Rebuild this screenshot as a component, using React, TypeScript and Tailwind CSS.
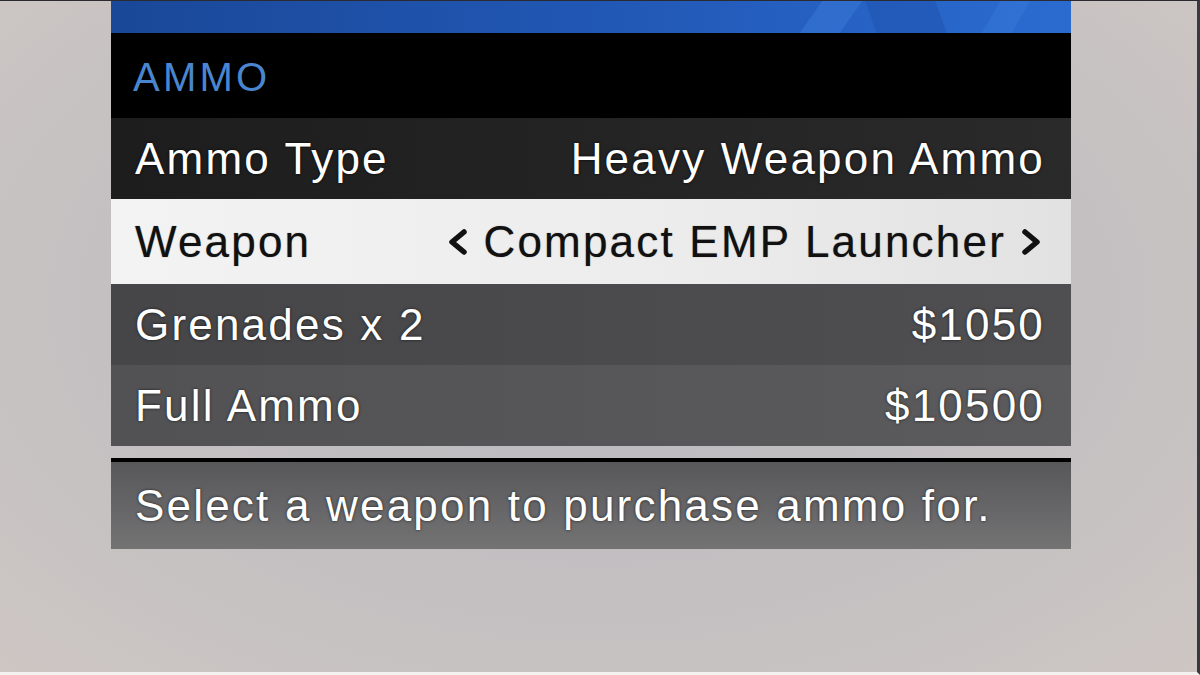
import React from 'react';

type Row = { label: string; value: string };

const priceRows: Row[] = [
  { label: 'Grenades x 2', value: '$1050' },
  { label: 'Full Ammo', value: '$10500' },
];

const font = "font-['Liberation_Sans',Arial,sans-serif]";

const Chevron = ({ dir }: { dir: 'left' | 'right' }) => (
  <svg width="22" height="28" viewBox="0 0 22 28" className="shrink-0">
    <polyline
      points={dir === 'left' ? '17,4 5,14 17,24' : '5,4 17,14 5,24'}
      fill="none"
      stroke="#111"
      strokeWidth="5.5"
      strokeLinecap="round"
      strokeLinejoin="round"
    />
  </svg>
);

export default function App() {
  return (
    <div
      className={`${font} h-[675px] w-[1200px] overflow-hidden border-t border-r-[3px] border-b-[3px] border-t-[#2a2a30] border-r-[#3a3a3e] border-b-[#f4f2f0] bg-[radial-gradient(ellipse_at_50%_45%,#b9b8be_0%,#c1bec1_45%,#cdc6c3_100%)]`}
    >
      <div className="ml-[111px] flex w-[960px] flex-col">
        {/* header strip */}
        <div className="relative h-[32px] overflow-hidden bg-[linear-gradient(90deg,#1a4898_0%,#2157b4_50%,#2b6bd0_100%)]">
          <div className="absolute top-0 left-[700px] h-full w-[40px] -skew-x-[35deg] bg-[#3a7ad8]/50" />
          <div className="absolute top-0 left-[760px] h-full w-[70px] skew-x-[20deg] bg-[#1f55b0]/60" />
          <div className="absolute top-0 left-[880px] h-full w-[30px] -skew-x-[30deg] bg-[#3d7ddc]/40" />
        </div>

        {/* title */}
        <div className="flex h-[85px] items-center bg-black px-[22px] pt-[3px]">
          <span className="text-[40px] leading-none tracking-[3.2px] text-[#4a86cf]">AMMO</span>
        </div>

        <div className="flex h-[81px] items-center justify-between bg-[linear-gradient(90deg,#1d1d1e,#2a2a2b)] pr-[26px] pl-[24px] text-[44px] leading-none tracking-[2.2px] text-white [text-shadow:0_0_3px_rgba(0,0,0,0.9)]">
          <span>Ammo Type</span>
          <span>Heavy Weapon Ammo</span>
        </div>

        {/* selected row */}
        <div className="flex h-[85px] items-center justify-between bg-[linear-gradient(90deg,#f3f3f3,#ececec_60%,#e2e2e2)] pr-[29px] pl-[24px] text-[44px] leading-none tracking-[2.2px] text-[#111] [text-shadow:0_0_1px_rgba(0,0,0,0.5)]">
          <span>Weapon</span>
          <div className="flex items-center gap-[14px]">
            <Chevron dir="left" />
            <span>Compact EMP Launcher</span>
            <Chevron dir="right" />
          </div>
        </div>

        {priceRows.map((row, i) => (
          <div
            key={row.label}
            className={`flex h-[81px] items-center justify-between pr-[26px] pl-[24px] text-[44px] leading-none tracking-[2.2px] text-white [text-shadow:0_0_3px_rgba(0,0,0,0.7)] ${
              i === 0
                ? 'bg-[linear-gradient(90deg,#464648,#4f4f51)]'
                : 'bg-[linear-gradient(90deg,#525254,#5b5b5d)]'
            }`}
          >
            <span>{row.label}</span>
            <span>{row.value}</span>
          </div>
        ))}

        {/* help text */}
        <div className="mt-[12px] flex h-[91px] items-center border-t-[4px] border-black bg-[linear-gradient(180deg,#58585a,#68686a_60%,#747373)] pl-[24px] text-[44px] leading-none tracking-[2.2px] text-white [text-shadow:0_0_3px_rgba(0,0,0,0.7)]">
          Select a weapon to purchase ammo for.
        </div>
      </div>
    </div>
  );
}
